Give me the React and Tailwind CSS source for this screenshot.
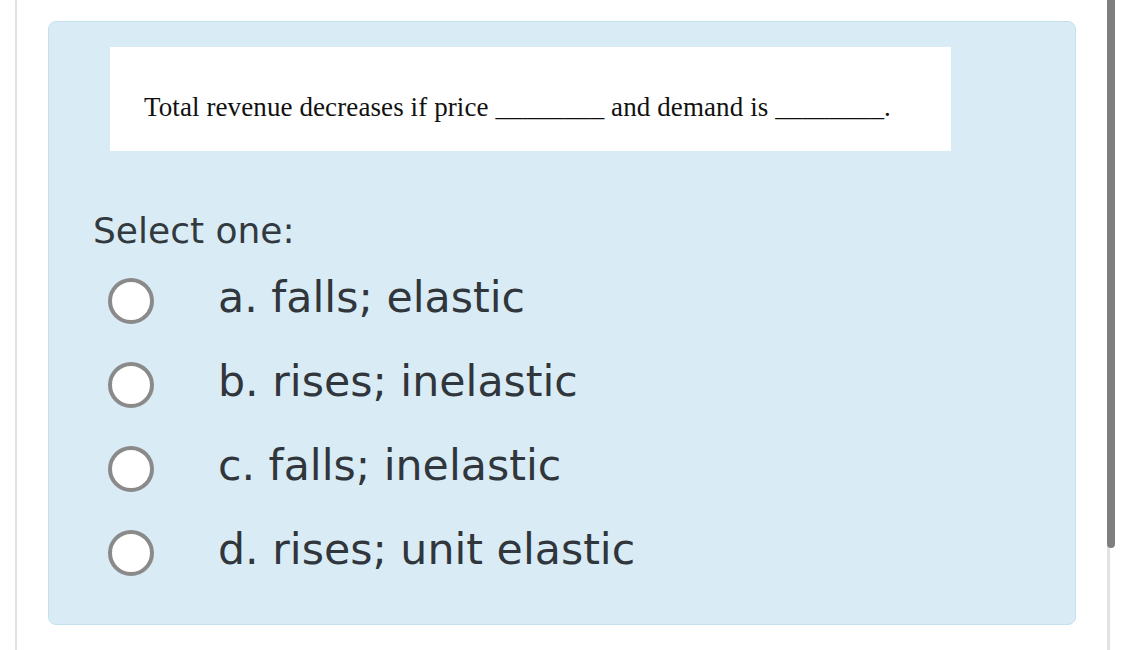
export default function App() {
  const options = ['a. falls; elastic', 'b. rises; inelastic', 'c. falls; inelastic', 'd. rises; unit elastic']

  return (
    <div className="relative w-[1125px] h-[650px] bg-white overflow-hidden pl-[15px]">
      <div className="h-full w-[1095px] border-l-2 border-r-[3px] border-[#e2e2e2] pl-[31px] pt-[21px]">
        <div className="w-[1028px] h-[604px] rounded-lg border border-[#c4e2ee] bg-[#d9ecf5] pt-[25px] pl-[61px]">
          <div className="w-[841px] h-[104px] bg-white flex items-center pl-[34px] pt-[16px] text-[27px] text-[#111] font-['Liberation_Serif',serif] tracking-[0.1px]">
            Total revenue decreases if price ________ and demand is ________.
          </div>
          <div className="mt-[58px] -ml-[17px] h-[44px] flex items-center text-[36px] text-[#333a3f] font-['DejaVu_Sans',sans-serif]">
            Select one:
          </div>
          <div className="mt-[6px] -ml-[2px] flex flex-col">
            {options.map((o) => (
              <div key={o} className="h-[84px] flex items-center">
                <div className="w-[46px] h-[46px] rounded-full border-[4px] border-[#8a8a8a] bg-white shrink-0" />
                <span className="ml-[64px] -mt-[8px] text-[42.7px] text-[#30363b] font-['DejaVu_Sans',sans-serif]">{o}</span>
              </div>
            ))}
          </div>
        </div>
      </div>
      <div className="absolute left-[1107px] top-0 w-[8px] h-[548px] rounded-b bg-[#7f7f7f]" />
    </div>
  )
}
